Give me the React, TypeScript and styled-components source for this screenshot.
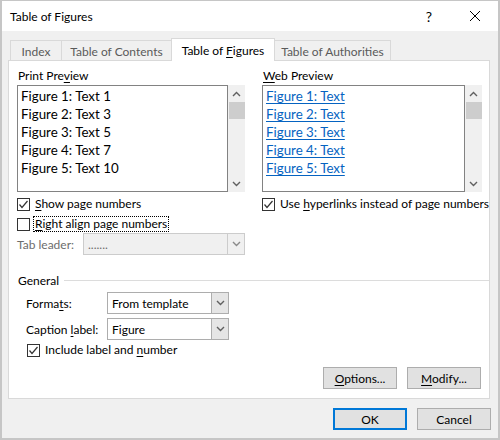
import styled, { createGlobalStyle } from 'styled-components';

const GlobalStyle = createGlobalStyle`
  html, body {
    margin: 0;
    padding: 0;
    background: #ffffff;
  }
  body {
    font-family: Lato, "Noto Sans", sans-serif;
    font-size: 12px;
    color: #000000;
  }
  * {
    box-sizing: border-box;
  }
  u {
    text-decoration-thickness: 1px;
    text-underline-offset: 2px;
  }
`;

const Window = styled.div`
  width: 500px;
  height: 440px;
  border: 2px solid #c6c6c6;
  border-top-width: 1px;
  display: flex;
  flex-direction: column;
  background: #f0f0f0;
`;

const TitleBar = styled.div`
  height: 30px;
  background: #ffffff;
  display: flex;
  align-items: center;
  padding-left: 8px;
  font-size: 12px;
`;

const TitleText = styled.div`
  flex: 1;
`;

const TitleButton = styled.div`
  width: 46px;
  height: 30px;
  display: flex;
  align-items: center;
  justify-content: center;
  font-size: 14px;
`;

const Body = styled.div`
  flex: 1;
  display: flex;
  flex-direction: column;
`;

const TabRow = styled.div`
  display: flex;
  align-items: flex-end;
  height: 22px;
  margin: 7px 0 0 8px;
  position: relative;
  z-index: 1;
`;

const Tab = styled.div<{ $w: number; $active?: boolean }>`
  width: ${p => p.$w}px;
  height: ${p => (p.$active ? 23 : 20)}px;
  margin-right: -1px;
  margin-bottom: ${p => (p.$active ? -1 : 0)}px;
  border: 1px solid #d9d9d9;
  border-bottom: none;
  background: ${p => (p.$active ? '#ffffff' : '#f0f0f0')};
  color: ${p => (p.$active ? '#000000' : '#5a5a5a')};
  display: flex;
  align-items: center;
  justify-content: center;
  padding-top: ${p => (p.$active ? 0 : 1)}px;
`;

const Panel = styled.div`
  width: 482px;
  height: 339px;
  margin-left: 6px;
  background: #ffffff;
  border: 1px solid #d9d9d9;
  padding: 7px 8px 0 8px;
  display: flex;
  flex-direction: column;
`;

const TopSection = styled.div`
  display: flex;
  height: 191px;
`;

const Column = styled.div<{ $w: number }>`
  width: ${p => p.$w}px;
  display: flex;
  flex-direction: column;
`;

const Separator = styled.div`
  width: 1px;
  background: #a0a0a0;
  margin: 0 8px 0 9px;
`;

const GroupLabel = styled.div`
  line-height: 15px;
  height: 15px;
  margin-bottom: 2px;
  padding-left: 1px;
`;

const ListBox = styled.div`
  display: flex;
  height: 107px;
`;

const ListItems = styled.div`
  flex: 1;
  border: 1px solid #828282;
  padding: 1px 0 0 3px;
  font-size: 13.33px;
`;

const ListItem = styled.div`
  line-height: 18px;
  height: 18px;
  white-space: nowrap;
`;

const LinkItem = styled(ListItem)`
  color: #0563c1;
  text-decoration: underline;
  text-decoration-thickness: 1px;
  text-underline-offset: 2px;
`;

const ScrollBar = styled.div`
  width: 17px;
  background: #f0f0f0;
  display: flex;
  flex-direction: column;
  align-items: center;
`;

const ScrollArrow = styled.div`
  height: 17px;
  width: 17px;
  display: flex;
  align-items: center;
  justify-content: center;
`;

const ScrollThumb = styled.div`
  width: 16px;
  height: 17px;
  background: #cdcdcd;
`;

const ScrollSpace = styled.div`
  flex: 1;
`;

const CheckRow = styled.div<{ $indent?: number; $top?: number }>`
  display: flex;
  align-items: center;
  height: 16px;
  margin-top: ${p => p.$top ?? 4}px;
  padding-left: ${p => p.$indent ?? 0}px;
  white-space: nowrap;
`;

const Box = styled.div`
  width: 13px;
  height: 13px;
  border: 1px solid #333333;
  background: #ffffff;
  display: flex;
  align-items: center;
  justify-content: center;
  flex-shrink: 0;
`;

const CheckLabel = styled.span<{ $focus?: boolean }>`
  margin-left: ${p => (p.$focus ? 3 : 5)}px;
  padding: 0 ${p => (p.$focus ? 1 : 0)}px;
  border: ${p => (p.$focus ? '1px dotted #000000' : 'none')};
  line-height: 14px;
`;

const FieldRow = styled.div<{ $indent?: number; $top?: number }>`
  display: flex;
  align-items: center;
  height: 22px;
  margin-top: ${p => p.$top ?? 4}px;
  padding-left: ${p => p.$indent ?? 0}px;
`;

const FieldLabel = styled.div<{ $w: number; $disabled?: boolean }>`
  width: ${p => p.$w}px;
  color: ${p => (p.$disabled ? '#6d6d6d' : '#000000')};
`;

const Combo = styled.div<{ $w: number; $disabled?: boolean }>`
  width: ${p => p.$w}px;
  height: 22px;
  display: flex;
  border: 1px solid ${p => (p.$disabled ? '#cccccc' : '#adadad')};
  background: ${p => (p.$disabled ? '#f0f0f0' : '#ffffff')};
  color: ${p => (p.$disabled ? '#6d6d6d' : '#000000')};
`;

const ComboText = styled.div`
  flex: 1;
  padding-left: 4px;
  display: flex;
  align-items: center;
`;

const ComboArrow = styled.div<{ $disabled?: boolean }>`
  width: 17px;
  border-left: 1px solid ${p => (p.$disabled ? '#cccccc' : '#adadad')};
  background: ${p => (p.$disabled ? '#f0f0f0' : '#e5e5e5')};
  display: flex;
  align-items: center;
  justify-content: center;
`;

const GeneralHeader = styled.div`
  display: flex;
  align-items: center;
  height: 16px;
  margin-top: 13px;
  margin-right: -8px;
  padding-left: 1px;
`;

const HeaderLine = styled.div`
  flex: 1;
  height: 1px;
  background: #dcdcdc;
  margin-left: 5px;
`;

const ButtonRow = styled.div<{ $top: number; $gap: number; $right: number }>`
  display: flex;
  justify-content: flex-end;
  gap: ${p => p.$gap}px;
  margin-top: ${p => p.$top}px;
  padding-right: ${p => p.$right}px;
`;

const Button = styled.button<{ $default?: boolean }>`
  width: 74px;
  height: 22px;
  font: inherit;
  color: #000000;
  background: #e1e1e1;
  border: ${p => (p.$default ? '2px solid #0078d7' : '1px solid #adadad')};
  padding: 0;
`;

const Chevron = ({ up, color = '#606060' }: { up?: boolean; color?: string }) => (
  <svg width="9" height="6" viewBox="0 0 9 6">
    <path
      d={up ? 'M1 5 L4.5 1.5 L8 5' : 'M1 1 L4.5 4.5 L8 1'}
      fill="none"
      stroke={color}
      strokeWidth="1.4"
    />
  </svg>
);

const Check = () => (
  <svg width="11" height="11" viewBox="0 0 11 11">
    <path d="M1.5 5.5 L4 8.5 L9.5 2" fill="none" stroke="#333333" strokeWidth="1.2" />
  </svg>
);

const CheckBox = ({ checked }: { checked?: boolean }) => <Box>{checked && <Check />}</Box>;

const Scroll = () => (
  <ScrollBar>
    <ScrollArrow>
      <Chevron up />
    </ScrollArrow>
    <ScrollThumb />
    <ScrollSpace />
    <ScrollArrow>
      <Chevron />
    </ScrollArrow>
  </ScrollBar>
);

const printItems = ['Figure 1: Text 1', 'Figure 2: Text 3', 'Figure 3: Text 5', 'Figure 4: Text 7', 'Figure 5: Text 10'];
const webItems = ['Figure 1: Text', 'Figure 2: Text', 'Figure 3: Text', 'Figure 4: Text', 'Figure 5: Text'];

export default function App() {
  return (
    <>
      <GlobalStyle />
      <Window>
        <TitleBar>
          <TitleText>Table of Figures</TitleText>
          <TitleButton>?</TitleButton>
          <TitleButton>
            <svg width="12" height="12" viewBox="0 0 12 12">
              <path d="M1 1 L11 11 M11 1 L1 11" stroke="#000000" strokeWidth="1" />
            </svg>
          </TitleButton>
        </TitleBar>
        <Body>
          <TabRow>
            <Tab $w={52}>Index</Tab>
            <Tab $w={111}>Table of Contents</Tab>
            <Tab $w={104} $active>
              <span>
                Table of <u>F</u>igures
              </span>
            </Tab>
            <Tab $w={117}>Table of Authorities</Tab>
          </TabRow>
          <Panel>
            <TopSection>
              <Column $w={228}>
                <GroupLabel>
                  Print Pre<u>v</u>iew
                </GroupLabel>
                <ListBox>
                  <ListItems>
                    {printItems.map(t => (
                      <ListItem key={t}>{t}</ListItem>
                    ))}
                  </ListItems>
                  <Scroll />
                </ListBox>
                <CheckRow $top={4}>
                  <CheckBox checked />
                  <CheckLabel>
                    <u>S</u>how page numbers
                  </CheckLabel>
                </CheckRow>
                <CheckRow $top={4}>
                  <CheckBox />
                  <CheckLabel $focus>
                    <u>R</u>ight align page numbers
                  </CheckLabel>
                </CheckRow>
                <FieldRow $top={1}>
                  <FieldLabel $w={66} $disabled>
                    Tab leader:
                  </FieldLabel>
                  <Combo $w={162} $disabled>
                    <ComboText>.......</ComboText>
                    <ComboArrow $disabled>
                      <Chevron color="#8a8a8a" />
                    </ComboArrow>
                  </Combo>
                </FieldRow>
              </Column>
              <Separator />
              <Column $w={220}>
                <GroupLabel>
                  <u>W</u>eb Preview
                </GroupLabel>
                <ListBox>
                  <ListItems>
                    {webItems.map(t => (
                      <LinkItem key={t}>{t}</LinkItem>
                    ))}
                  </ListItems>
                  <Scroll />
                </ListBox>
                <CheckRow $top={4}>
                  <CheckBox checked />
                  <CheckLabel>
                    Use <u>h</u>yperlinks instead of page numbers
                  </CheckLabel>
                </CheckRow>
              </Column>
            </TopSection>
            <GeneralHeader>
              General
              <HeaderLine />
            </GeneralHeader>
            <FieldRow $indent={9} $top={4}>
              <FieldLabel $w={81}>
                Forma<u>t</u>s:
              </FieldLabel>
              <Combo $w={122}>
                <ComboText>From template</ComboText>
                <ComboArrow>
                  <Chevron />
                </ComboArrow>
              </Combo>
            </FieldRow>
            <FieldRow $indent={9} $top={4}>
              <FieldLabel $w={81}>
                Caption <u>l</u>abel:
              </FieldLabel>
              <Combo $w={122}>
                <ComboText>Figure</ComboText>
                <ComboArrow>
                  <Chevron />
                </ComboArrow>
              </Combo>
            </FieldRow>
            <CheckRow $indent={10} $top={2}>
              <CheckBox checked />
              <CheckLabel>
                Include label and <u>n</u>umber
              </CheckLabel>
            </CheckRow>
            <ButtonRow $top={9} $gap={10} $right={0}>
              <Button>
                <u>O</u>ptions...
              </Button>
              <Button>
                <u>M</u>odify...
              </Button>
            </ButtonRow>
          </Panel>
          <ButtonRow $top={9} $gap={10} $right={7}>
            <Button $default>OK</Button>
            <Button>Cancel</Button>
          </ButtonRow>
        </Body>
      </Window>
    </>
  );
}
